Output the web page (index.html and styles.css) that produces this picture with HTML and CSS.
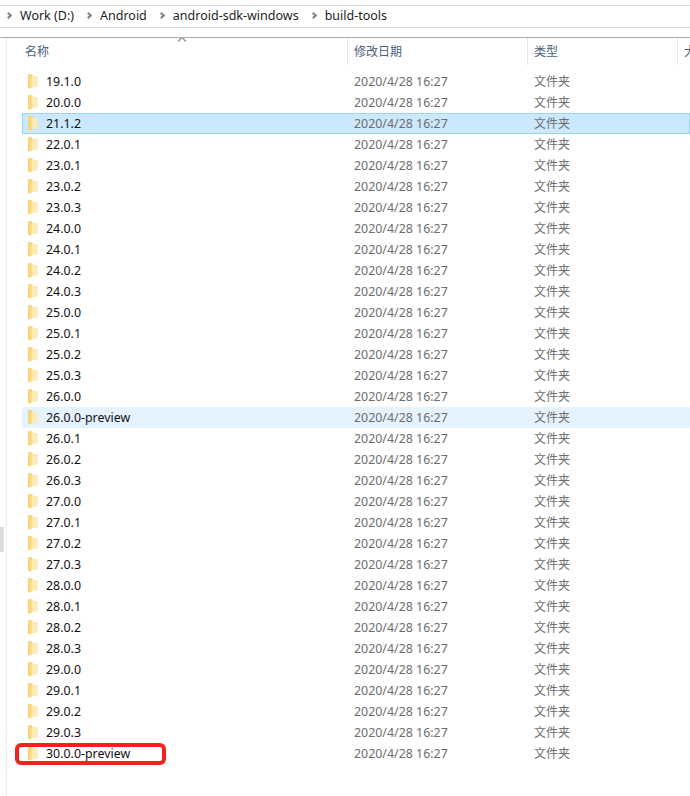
FILE: index.html
```html
<!DOCTYPE html>
<html lang="zh-CN">
<head>
<meta charset="utf-8">
<title>build-tools</title>
<link rel="stylesheet" href="styles.css">
</head>
<body>
<svg class="defs" width="0" height="0" aria-hidden="true">
<symbol id="folder" viewBox="0 0 11 15">
<path d="M1 0.5H5L6 2V13L1 14Z" fill="#f0c860"/>
<path d="M1 2H10.5V12.5H6L2 14.5H1Z" fill="#fce4a0"/>
<path d="M3 2H10.5V12.5H3Z" fill="#fdeab8"/>
<path d="M1 0.5H4.5V13.5L1 14.5Z" fill="#f8d678"/>
</symbol>
</svg>
<nav class="address">
<span class="chev"></span><span class="crumb">Work (D:)</span>
<span class="chev"></span><span class="crumb">Android</span>
<span class="chev"></span><span class="crumb">android-sdk-windows</span>
<span class="chev"></span><span class="crumb">build-tools</span>
</nav>
<main class="pane">
<div class="side"><span class="thumb"></span></div>
<section class="list">
<header class="head">
<span class="h-name">名称<i class="sort"></i></span>
<span class="h-date">修改日期</span>
<span class="h-type">类型</span>
<span class="h-size">大小</span>
</header>
<div class="rows">
<div class="row"><span class="c-icon"><svg class="ico"><use href="#folder"/></svg></span><span class="c-name">19.1.0</span><span class="c-date">2020/4/28 16:27</span><span class="c-type">文件夹</span></div>
<div class="row"><span class="c-icon"><svg class="ico"><use href="#folder"/></svg></span><span class="c-name">20.0.0</span><span class="c-date">2020/4/28 16:27</span><span class="c-type">文件夹</span></div>
<div class="row selected"><span class="c-icon"><svg class="ico"><use href="#folder"/></svg></span><span class="c-name">21.1.2</span><span class="c-date">2020/4/28 16:27</span><span class="c-type">文件夹</span></div>
<div class="row"><span class="c-icon"><svg class="ico"><use href="#folder"/></svg></span><span class="c-name">22.0.1</span><span class="c-date">2020/4/28 16:27</span><span class="c-type">文件夹</span></div>
<div class="row"><span class="c-icon"><svg class="ico"><use href="#folder"/></svg></span><span class="c-name">23.0.1</span><span class="c-date">2020/4/28 16:27</span><span class="c-type">文件夹</span></div>
<div class="row"><span class="c-icon"><svg class="ico"><use href="#folder"/></svg></span><span class="c-name">23.0.2</span><span class="c-date">2020/4/28 16:27</span><span class="c-type">文件夹</span></div>
<div class="row"><span class="c-icon"><svg class="ico"><use href="#folder"/></svg></span><span class="c-name">23.0.3</span><span class="c-date">2020/4/28 16:27</span><span class="c-type">文件夹</span></div>
<div class="row"><span class="c-icon"><svg class="ico"><use href="#folder"/></svg></span><span class="c-name">24.0.0</span><span class="c-date">2020/4/28 16:27</span><span class="c-type">文件夹</span></div>
<div class="row"><span class="c-icon"><svg class="ico"><use href="#folder"/></svg></span><span class="c-name">24.0.1</span><span class="c-date">2020/4/28 16:27</span><span class="c-type">文件夹</span></div>
<div class="row"><span class="c-icon"><svg class="ico"><use href="#folder"/></svg></span><span class="c-name">24.0.2</span><span class="c-date">2020/4/28 16:27</span><span class="c-type">文件夹</span></div>
<div class="row"><span class="c-icon"><svg class="ico"><use href="#folder"/></svg></span><span class="c-name">24.0.3</span><span class="c-date">2020/4/28 16:27</span><span class="c-type">文件夹</span></div>
<div class="row"><span class="c-icon"><svg class="ico"><use href="#folder"/></svg></span><span class="c-name">25.0.0</span><span class="c-date">2020/4/28 16:27</span><span class="c-type">文件夹</span></div>
<div class="row"><span class="c-icon"><svg class="ico"><use href="#folder"/></svg></span><span class="c-name">25.0.1</span><span class="c-date">2020/4/28 16:27</span><span class="c-type">文件夹</span></div>
<div class="row"><span class="c-icon"><svg class="ico"><use href="#folder"/></svg></span><span class="c-name">25.0.2</span><span class="c-date">2020/4/28 16:27</span><span class="c-type">文件夹</span></div>
<div class="row"><span class="c-icon"><svg class="ico"><use href="#folder"/></svg></span><span class="c-name">25.0.3</span><span class="c-date">2020/4/28 16:27</span><span class="c-type">文件夹</span></div>
<div class="row"><span class="c-icon"><svg class="ico"><use href="#folder"/></svg></span><span class="c-name">26.0.0</span><span class="c-date">2020/4/28 16:27</span><span class="c-type">文件夹</span></div>
<div class="row hover"><span class="c-icon"><svg class="ico"><use href="#folder"/></svg></span><span class="c-name">26.0.0-preview</span><span class="c-date">2020/4/28 16:27</span><span class="c-type">文件夹</span></div>
<div class="row"><span class="c-icon"><svg class="ico"><use href="#folder"/></svg></span><span class="c-name">26.0.1</span><span class="c-date">2020/4/28 16:27</span><span class="c-type">文件夹</span></div>
<div class="row"><span class="c-icon"><svg class="ico"><use href="#folder"/></svg></span><span class="c-name">26.0.2</span><span class="c-date">2020/4/28 16:27</span><span class="c-type">文件夹</span></div>
<div class="row"><span class="c-icon"><svg class="ico"><use href="#folder"/></svg></span><span class="c-name">26.0.3</span><span class="c-date">2020/4/28 16:27</span><span class="c-type">文件夹</span></div>
<div class="row"><span class="c-icon"><svg class="ico"><use href="#folder"/></svg></span><span class="c-name">27.0.0</span><span class="c-date">2020/4/28 16:27</span><span class="c-type">文件夹</span></div>
<div class="row"><span class="c-icon"><svg class="ico"><use href="#folder"/></svg></span><span class="c-name">27.0.1</span><span class="c-date">2020/4/28 16:27</span><span class="c-type">文件夹</span></div>
<div class="row"><span class="c-icon"><svg class="ico"><use href="#folder"/></svg></span><span class="c-name">27.0.2</span><span class="c-date">2020/4/28 16:27</span><span class="c-type">文件夹</span></div>
<div class="row"><span class="c-icon"><svg class="ico"><use href="#folder"/></svg></span><span class="c-name">27.0.3</span><span class="c-date">2020/4/28 16:27</span><span class="c-type">文件夹</span></div>
<div class="row"><span class="c-icon"><svg class="ico"><use href="#folder"/></svg></span><span class="c-name">28.0.0</span><span class="c-date">2020/4/28 16:27</span><span class="c-type">文件夹</span></div>
<div class="row"><span class="c-icon"><svg class="ico"><use href="#folder"/></svg></span><span class="c-name">28.0.1</span><span class="c-date">2020/4/28 16:27</span><span class="c-type">文件夹</span></div>
<div class="row"><span class="c-icon"><svg class="ico"><use href="#folder"/></svg></span><span class="c-name">28.0.2</span><span class="c-date">2020/4/28 16:27</span><span class="c-type">文件夹</span></div>
<div class="row"><span class="c-icon"><svg class="ico"><use href="#folder"/></svg></span><span class="c-name">28.0.3</span><span class="c-date">2020/4/28 16:27</span><span class="c-type">文件夹</span></div>
<div class="row"><span class="c-icon"><svg class="ico"><use href="#folder"/></svg></span><span class="c-name">29.0.0</span><span class="c-date">2020/4/28 16:27</span><span class="c-type">文件夹</span></div>
<div class="row"><span class="c-icon"><svg class="ico"><use href="#folder"/></svg></span><span class="c-name">29.0.1</span><span class="c-date">2020/4/28 16:27</span><span class="c-type">文件夹</span></div>
<div class="row"><span class="c-icon"><svg class="ico"><use href="#folder"/></svg></span><span class="c-name">29.0.2</span><span class="c-date">2020/4/28 16:27</span><span class="c-type">文件夹</span></div>
<div class="row"><span class="c-icon"><svg class="ico"><use href="#folder"/></svg></span><span class="c-name">29.0.3</span><span class="c-date">2020/4/28 16:27</span><span class="c-type">文件夹</span></div>
<div class="row last"><span class="c-icon"><svg class="ico"><use href="#folder"/></svg></span><span class="c-name">30.0.0-preview</span><span class="c-date">2020/4/28 16:27</span><span class="c-type">文件夹</span><span class="callout"></span></div>
</div>
</section>
</main>
</body>
</html>
```
FILE: styles.css
```css
* { box-sizing: border-box; }
html, body { margin: 0; padding: 0; }
body {
  width: 690px;
  height: 796px;
  overflow: hidden;
  background: #fff;
  color: #1a1a1a;
  font-family: "Noto Sans", "Noto Sans CJK SC", sans-serif;
  font-size: 12px;
}
.defs { position: absolute; }
.address {
  display: flex;
  align-items: center;
  height: 23px;
  margin-top: 5px;
  border-top: 1px solid #d9d9d9;
  border-bottom: 1px solid #d9d9d9;
  padding-left: 6px;
  padding-bottom: 2px;
  color: #1e1e1e;
  font-size: 12.5px;
  line-height: 17px;
}
.chev {
  width: 5px;
  height: 5px;
  border-top: 2px solid #808080;
  border-right: 2px solid #808080;
  transform: rotate(45deg);
  flex: none;
}
.crumb { margin: 0 12px 0 9px; white-space: nowrap; }
.pane {
  display: flex;
  margin-top: 9px;
  border-top: 1px solid #a9a9a9;
  height: 759px;
}
.side {
  width: 7px;
  flex: none;
  border-right: 1px solid #ececec;
  padding-top: 489px;
}
.thumb { display: block; width: 4px; height: 25px; background: #dcdcdc; }
.list { flex: 1; min-width: 0; display: flex; flex-direction: column; }
.head {
  display: flex;
  height: 27px;
  color: #4c607a;
  line-height: 28px;
  white-space: nowrap;
  overflow: hidden;
}
.head span { flex: none; padding-left: 5px; border-right: 1px solid #e5e5e5; }
.h-name { position: relative; width: 341px; padding-left: 18px !important; }
.h-date { width: 180px; padding-left: 6px !important; }
.h-type { width: 150px; padding-left: 6px !important; }
.head .h-size { border-right: 0; padding-left: 6px; }
.sort {
  position: absolute;
  left: 172px;
  top: 0;
  width: 6px;
  height: 6px;
  border-top: 1px solid #777;
  border-left: 1px solid #777;
  transform: rotate(45deg);
}
.rows { padding: 6px 0 0 15px; font-size: 12.4px; }
.row {
  position: relative;
  display: flex;
  align-items: center;
  height: 21px;
  line-height: 19px;
  white-space: nowrap;
  border: 1px solid transparent;
}
.row.selected { background: #cce8ff; border-color: #99d1ff; }
.row.hover { background: #e5f3ff; border-color: #e5f3ff; }
.c-icon { width: 23px; flex: none; display: flex; padding-left: 4px; }
.ico { width: 11px; height: 15px; display: block; }
.c-name { width: 308px; flex: none; color: #111; }
.c-date { width: 180px; flex: none; color: #6d6d6d; }
.c-type { flex: none; color: #6d6d6d; font-size: 12px; }
.callout {
  position: absolute;
  left: -8px;
  top: -1px;
  width: 151px;
  height: 22px;
  border: 4px solid #f5211c;
  border-radius: 6px;
}
```
